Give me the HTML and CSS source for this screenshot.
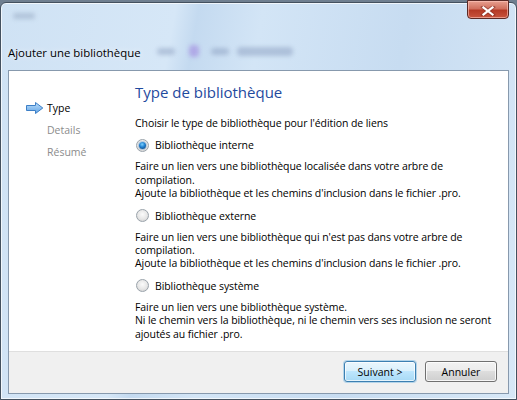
FILE: index.html
```html
<!DOCTYPE html>
<html lang="fr">
<head>
<meta charset="utf-8">
<title>Ajouter une bibliothèque</title>
<link rel="stylesheet" href="styles.css">
</head>
<body>
<div class="window">
  <div class="glass">
    <span class="blur b1"></span><span class="blur b2"></span><span class="blur b3"></span><span class="blur b4"></span><span class="blur b5"></span>
  </div>
  <div class="titlebar">
    <span class="title">Ajouter une bibliothèque</span>
    <button class="close" aria-label="Fermer">
      <svg width="16" height="10" viewBox="0 0 16 10"><path d="M3 1 L13 9 M13 1 L3 9" stroke="#7a2a22" stroke-width="4" stroke-linecap="square" opacity="0.5"/><path d="M3.5 1.5 L12.5 8.5 M12.5 1.5 L3.5 8.5" stroke="#fff" stroke-width="2.2" stroke-linecap="square"/></svg>
    </button>
  </div>
  <div class="client">
    <div class="content">
      <ul class="steps">
        <li class="step current">
          <svg class="arrow" width="18" height="12" viewBox="0 0 18 12"><defs><linearGradient id="ag" x1="0" y1="0" x2="0" y2="1"><stop offset="0" stop-color="#bfe0fb"/><stop offset="1" stop-color="#5fa3e6"/></linearGradient></defs><path d="M0.5 3.5 H9.5 V0.5 L16.8 6 L9.5 11.5 V8.5 H0.5 Z" fill="url(#ag)" stroke="#3d7fc6" stroke-width="1"/></svg>
          <span>Type</span>
        </li>
        <li class="step">Details</li>
        <li class="step">Résumé</li>
      </ul>
      <div class="page">
        <h1 class="heading">Type de bibliothèque</h1>
        <p class="text">Choisir le type de bibliothèque pour l'édition de liens</p>
        <label class="radio checked"><span class="dot"></span>Bibliothèque interne</label>
        <p class="text">Faire un lien vers une bibliothèque localisée dans votre arbre de compilation.<br>Ajoute la bibliothèque et les chemins d'inclusion dans le fichier .pro.</p>
        <label class="radio"><span class="dot"></span>Bibliothèque externe</label>
        <p class="text">Faire un lien vers une bibliothèque qui n'est pas dans votre arbre de compilation.<br>Ajoute la bibliothèque et les chemins d'inclusion dans le fichier .pro.</p>
        <label class="radio"><span class="dot"></span>Bibliothèque système</label>
        <p class="text">Faire un lien vers une bibliothèque système.<br>Ni le chemin vers la bibliothèque, ni le chemin vers ses inclusion ne seront ajoutés au fichier .pro.</p>
      </div>
    </div>
    <div class="footer">
      <button class="btn default">Suivant &gt;</button>
      <button class="btn">Annuler</button>
    </div>
  </div>
</div>
</body>
</html>
```
FILE: styles.css
```css
* { box-sizing: border-box; }
html, body { margin: 0; padding: 0; }
body {
  width: 517px;
  height: 400px;
  overflow: hidden;
  background: #6f7f90;
  font-family: "Open Sans", "Noto Sans", "DejaVu Sans", sans-serif;
}
.window {
  position: relative;
  width: 517px;
  height: 398px;
  margin-top: 2px;
  border: 1px solid #44515f;
  border-radius: 6px 6px 0 0;
  background: linear-gradient(100deg, #cfe2f4 0%, #d6e7f7 30%, #c4daf0 34%, #d3e5f6 45%, #c7dcf1 70%, #d8e8f7 100%);
  display: flex;
  flex-direction: column;
  box-shadow: inset 0 0 0 1px rgba(255,255,255,0.7);
}
.glass { position: absolute; inset: 0; overflow: hidden; pointer-events: none; }
.blur { position: absolute; border-radius: 4px; filter: blur(2px); }
.b1 { left: 12px; top: 10px; width: 22px; height: 6px; background: rgba(120,140,170,0.35); }
.b2 { left: 156px; top: 45px; width: 18px; height: 7px; background: rgba(110,130,170,0.35); }
.b3 { left: 188px; top: 42px; width: 10px; height: 12px; background: rgba(150,110,220,0.45); }
.b4 { left: 210px; top: 45px; width: 18px; height: 7px; background: rgba(110,130,170,0.35); }
.b5 { left: 236px; top: 44px; width: 56px; height: 9px; background: rgba(110,130,170,0.35); }
.titlebar {
  position: relative;
  height: 67px;
  flex: none;
  display: flex;
  align-items: flex-end;
  padding: 0 0 10px 7px;
}
.title {
  font-size: 11.4px;
  color: #000;
  text-shadow: 0 0 6px rgba(255,255,255,0.9);
}
.close {
  position: absolute;
  top: -3px;
  right: 7px;
  width: 42px;
  height: 19px;
  padding: 3px 0 0;
  border: 1px solid #5b2a26;
  border-radius: 0 0 4px 4px;
  background: linear-gradient(#e8a090 0%, #d0705e 45%, #b53a26 55%, #c8553e 100%);
  box-shadow: inset 0 0 0 1px rgba(255,200,190,0.6);
  display: flex;
  justify-content: center;
  align-items: center;
}
.client {
  flex: none;
  margin: 0 7px 0 7px;
  height: 324px;
  border: 1px solid #8799ad;
  background: #fff;
  display: flex;
  flex-direction: column;
}
.content {
  flex: 1;
  min-height: 0;
  overflow: hidden;
  display: flex;
}
.steps {
  list-style: none;
  margin: 0;
  padding: 26px 0 0 17px;
  width: 126px;
  flex: none;
}
.step {
  height: 22px;
  line-height: 22px;
  font-size: 10.5px;
  color: #8c8c8c;
  padding-left: 21px;
}
.step.current {
  color: #000;
  padding-left: 0;
  display: flex;
  align-items: center;
  gap: 3px;
}
.arrow { display: block; }
.page {
  display: flex;
  flex-direction: column;
  gap: 7px;
  padding-top: 11px;
  width: 366px;
}
.heading {
  margin: 0 0 8px;
  font-size: 15px;
  font-weight: normal;
  line-height: 20px;
  color: #1f4a9e;
}
.text {
  margin: 0;
  font-size: 10.5px;
  letter-spacing: -0.08px;
  line-height: 13.4px;
  color: #000;
}
.radio {
  display: flex;
  align-items: center;
  gap: 6px;
  font-size: 10.5px;
  letter-spacing: -0.08px;
  line-height: 16px;
  height: 16px;
}
.dot {
  width: 13px;
  height: 13px;
  border-radius: 50%;
  border: 1px solid #9aa3ab;
  background: radial-gradient(circle at 50% 40%, #fbfbfb 0%, #e6e6e6 55%, #c9c9c9 100%);
  margin-left: 1px;
  position: relative;
}
.radio.checked .dot::after {
  content: "";
  position: absolute;
  left: 2px; top: 2px;
  width: 7px; height: 7px;
  border-radius: 50%;
  background: radial-gradient(circle at 45% 35%, #7ad0ff 0%, #1f7fcf 45%, #0b3a6e 100%);
  box-shadow: 0 0 0 1px rgba(80,140,200,0.35);
}
.footer {
  flex: none;
  height: 42px;
  border-top: 1px solid #dfdfdf;
  background: #f0f0f0;
  display: flex;
  justify-content: flex-end;
  align-items: center;
  gap: 9px;
  padding: 0 11px 2px 0;
}
.btn {
  width: 72px;
  height: 21px;
  font-family: inherit;
  font-size: 10.5px;
  color: #000;
  border: 1px solid #707070;
  border-radius: 3px;
  background: linear-gradient(#f2f2f2 0%, #ebebeb 49%, #dddddd 50%, #cfcfcf 100%);
  box-shadow: inset 0 0 0 1px rgba(255,255,255,0.8);
  padding: 0;
}
.btn.default {
  border-color: #3c7fb1;
  background: linear-gradient(#eaf6fd 0%, #d9f0fc 49%, #bee6fd 50%, #a7d9f5 100%);
  box-shadow: inset 0 0 0 1px rgba(255,255,255,0.7), 0 0 0 1px rgba(70,160,220,0.35);
}
```
